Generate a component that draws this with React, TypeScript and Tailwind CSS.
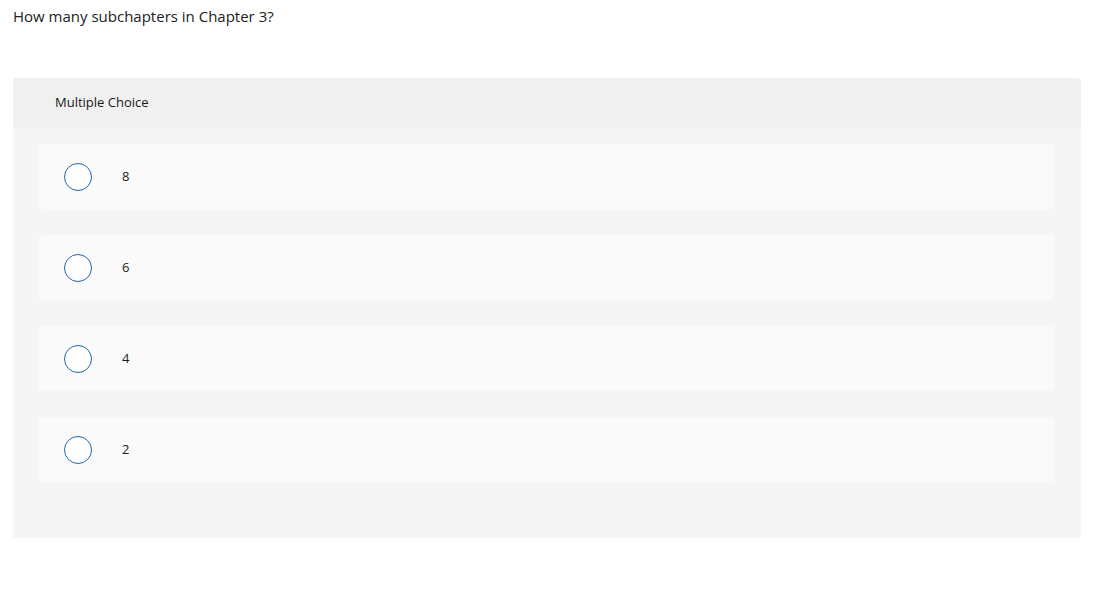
export default function App() {
  const choices = ['8', '6', '4', '2'];

  return (
    <div className="min-h-screen bg-white text-[#222] font-['Open_Sans','Liberation_Sans',Arial,sans-serif]">
      <div className="px-[13px] pt-[7px]">
        <p className="text-[15px] leading-[19px]">How many subchapters in Chapter 3?</p>

        <section className="mt-[52px] w-[1068px] rounded-[2px] bg-[#f5f5f5]">
          <div className="flex h-[50px] items-center bg-[#f0f0f0] pl-[42px] rounded-t-[2px]">
            <span className="text-[13px] text-[#1a1a1a]">Multiple Choice</span>
          </div>

          <div className="flex flex-col gap-[26px] pl-[26px] pr-[27px] pt-[16px] pb-[56px]">
            {choices.map((choice) => (
              <label
                key={choice}
                className="flex h-[65px] items-center rounded-[3px] bg-[#fafafa] pl-[25px]"
              >
                <span className="h-[28px] w-[28px] rounded-full border border-[#2266a8] bg-white" />
                <span className="ml-[30px] text-[13px] text-[#1a1a1a]">{choice}</span>
              </label>
            ))}
          </div>
        </section>
      </div>
    </div>
  );
}
